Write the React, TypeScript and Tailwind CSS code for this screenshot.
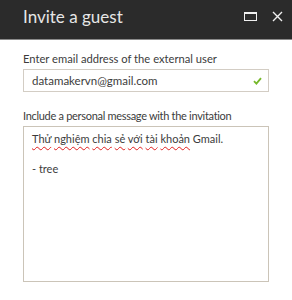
import React from "react";

const font = { fontFamily: 'Lato, "Open Sans", sans-serif' };

function Sp({ children }: { children: React.ReactNode }) {
  return (
    <span className="underline decoration-wavy decoration-[#e02020] decoration-1 underline-offset-[3px]">
      {children}
    </span>
  );
}

export default function App() {
  return (
    <div className="w-[292px] h-[300px] bg-white overflow-hidden" style={font}>
      <div className="h-[40px] bg-[#2b2b2b] border-b border-[#8a8a8a] flex items-center pl-[23px] pr-[9px]">
        <div className="text-[17px] text-[#e6e6e6] leading-none -mt-[6px]">Invite a guest</div>
        <div className="ml-auto flex items-center gap-[15px] -mt-[6px]">
          <div className="w-[13px] h-[9px] border border-t-[2px] border-[#f0f0f0]" />
          <svg width="11" height="11" viewBox="0 0 11 11">
            <path d="M1 1 L10 10 M10 1 L1 10" stroke="#f0f0f0" strokeWidth="1.4" />
          </svg>
        </div>
      </div>
      <div className="px-[23px] pt-[12px]">
        <div className="text-[11.2px] text-[#3c3c3c] leading-[14px]">Enter email address of the external user</div>
        <div className="mt-[3px] h-[23px] border border-[#d3cdc4] flex items-center pl-[8px] pr-[6px]">
          <span className="text-[11.5px] text-[#3c3c3c]">datamakervn@gmail.com</span>
          <svg className="ml-auto" width="9" height="8" viewBox="0 0 9 8">
            <path d="M1 4.2 L3.4 6.6 L8 1.2" stroke="#76b82a" strokeWidth="1.8" fill="none" />
          </svg>
        </div>
        <div className="mt-[17px] text-[11px] text-[#3c3c3c] leading-[14px] tracking-[-0.3px]">Include a personal message with the invitation</div>
        <div className="mt-[3px] h-[156px] border border-[#cbc4b8] pl-[8px] pt-[4px] text-[11px] text-[#3c3c3c] leading-[15px]">
          <div>
            <Sp>Thử</Sp> <Sp>nghiệm</Sp> <Sp>chia</Sp> <Sp>sẻ</Sp> <Sp>với</Sp> <Sp>tài</Sp> <Sp>khoản</Sp> Gmail.
          </div>
          <div>&nbsp;</div>
          <div>- tree</div>
        </div>
      </div>
    </div>
  );
}
